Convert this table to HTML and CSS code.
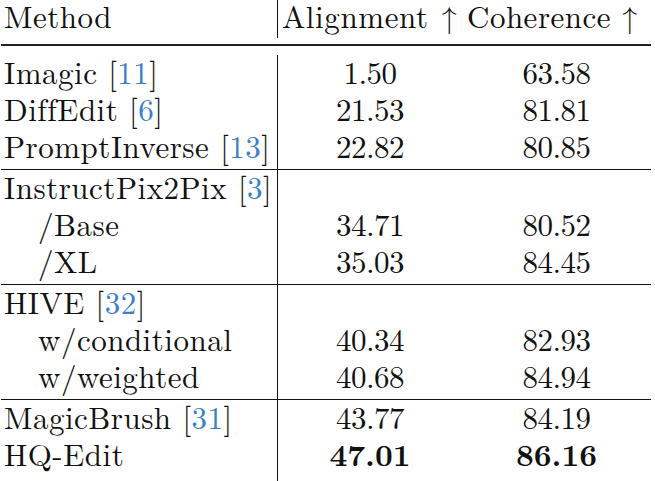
FILE: index.html
```html
<!DOCTYPE html>
<html>
<head>
<meta charset="utf-8">
<link rel="stylesheet" href="styles.css">
</head>
<body>
<div class="tbl">
  <div class="row head">
    <div class="c1">Method</div>
    <div class="c2 hd">Alignment ↑</div>
    <div class="c3 hd">Coherence ↑</div>
  </div>
  <div class="gap-top"></div>
  <div class="midrule"></div>
  <div class="gap-bot"></div>

  <div class="group first">
    <div class="row"><div class="c1">Imagic [<span class="cite">11</span>]</div><div class="c2">1.50</div><div class="c3">63.58</div></div>
    <div class="row"><div class="c1">DiffEdit [<span class="cite">6</span>]</div><div class="c2">21.53</div><div class="c3">81.81</div></div>
    <div class="row"><div class="c1">PromptInverse [<span class="cite">13</span>]</div><div class="c2">22.82</div><div class="c3">80.85</div></div>
  </div>
  <div class="rule"></div>
  <div class="group">
    <div class="row"><div class="c1">InstructPix2Pix [<span class="cite">3</span>]</div><div class="c2"></div><div class="c3"></div></div>
    <div class="row"><div class="c1 sub">/Base</div><div class="c2">34.71</div><div class="c3">80.52</div></div>
    <div class="row"><div class="c1 sub">/XL</div><div class="c2">35.03</div><div class="c3">84.45</div></div>
  </div>
  <div class="rule"></div>
  <div class="group">
    <div class="row"><div class="c1">HIVE [<span class="cite">32</span>]</div><div class="c2"></div><div class="c3"></div></div>
    <div class="row"><div class="c1 sub">w/conditional</div><div class="c2">40.34</div><div class="c3">82.93</div></div>
    <div class="row"><div class="c1 sub">w/weighted</div><div class="c2">40.68</div><div class="c3">84.94</div></div>
  </div>
  <div class="rule"></div>
  <div class="group last">
    <div class="row"><div class="c1">MagicBrush [<span class="cite">31</span>]</div><div class="c2">43.77</div><div class="c3">84.19</div></div>
    <div class="row"><div class="c1">HQ-Edit</div><div class="c2 best">47.01</div><div class="c3 best">86.16</div></div>
  </div>
</div>
</body>
</html>
```
FILE: styles.css
```css
html, body {
  margin: 0;
  padding: 0;
  background: #ffffff;
}
body {
  width: 655px;
  height: 481px;
  overflow: hidden;
  font-family: "Latin Modern Roman", "CMU Serif", "Liberation Serif", Tinos, "Nimbus Roman", "Nimbus Roman No9 L", FreeSerif, "Noto Serif", "DejaVu Serif", Times, serif;
  font-size: 31px;
  color: #111;
}
.tbl {
  margin-left: 1px;
  width: 650px;
}
.row {
  display: grid;
  grid-template-columns: 277px 184px 1fr;
  height: 37px;
}
.row > div {
  line-height: 32px;
  padding-bottom: 5px;
  white-space: nowrap;
}
.head {
  height: 38px;
}
.head > div {
  line-height: 31px;
  padding-bottom: 7px;
}
.c1 {
  box-sizing: border-box;
  border-right: 1px solid #111;
  padding-left: 3px;
  letter-spacing: 0.5px;
}
.c1.sub {
  padding-left: 37px;
}
.c2, .c3 {
  text-align: center;
  letter-spacing: -0.5px;
}
.hd {
  letter-spacing: 0.5px;
}
.c2.hd {
  text-align: left;
  padding-left: 4px;
  letter-spacing: 0.6px;
  word-spacing: 2px;
}
.c3.hd {
  text-align: left;
  padding-left: 5px;
}
.best {
  font-weight: bold;
  letter-spacing: 0;
}
.cite {
  color: #3a80c8;
}
.gap-top {
  height: 6px;
}
.midrule {
  height: 2px;
  background: #222;
}
.gap-bot {
  height: 9px;
}
.rule {
  height: 1px;
  background: #111;
}
.group .row:last-child {
  height: 40px;
}
.group.last .row:last-child {
  height: 60px;
}
```
